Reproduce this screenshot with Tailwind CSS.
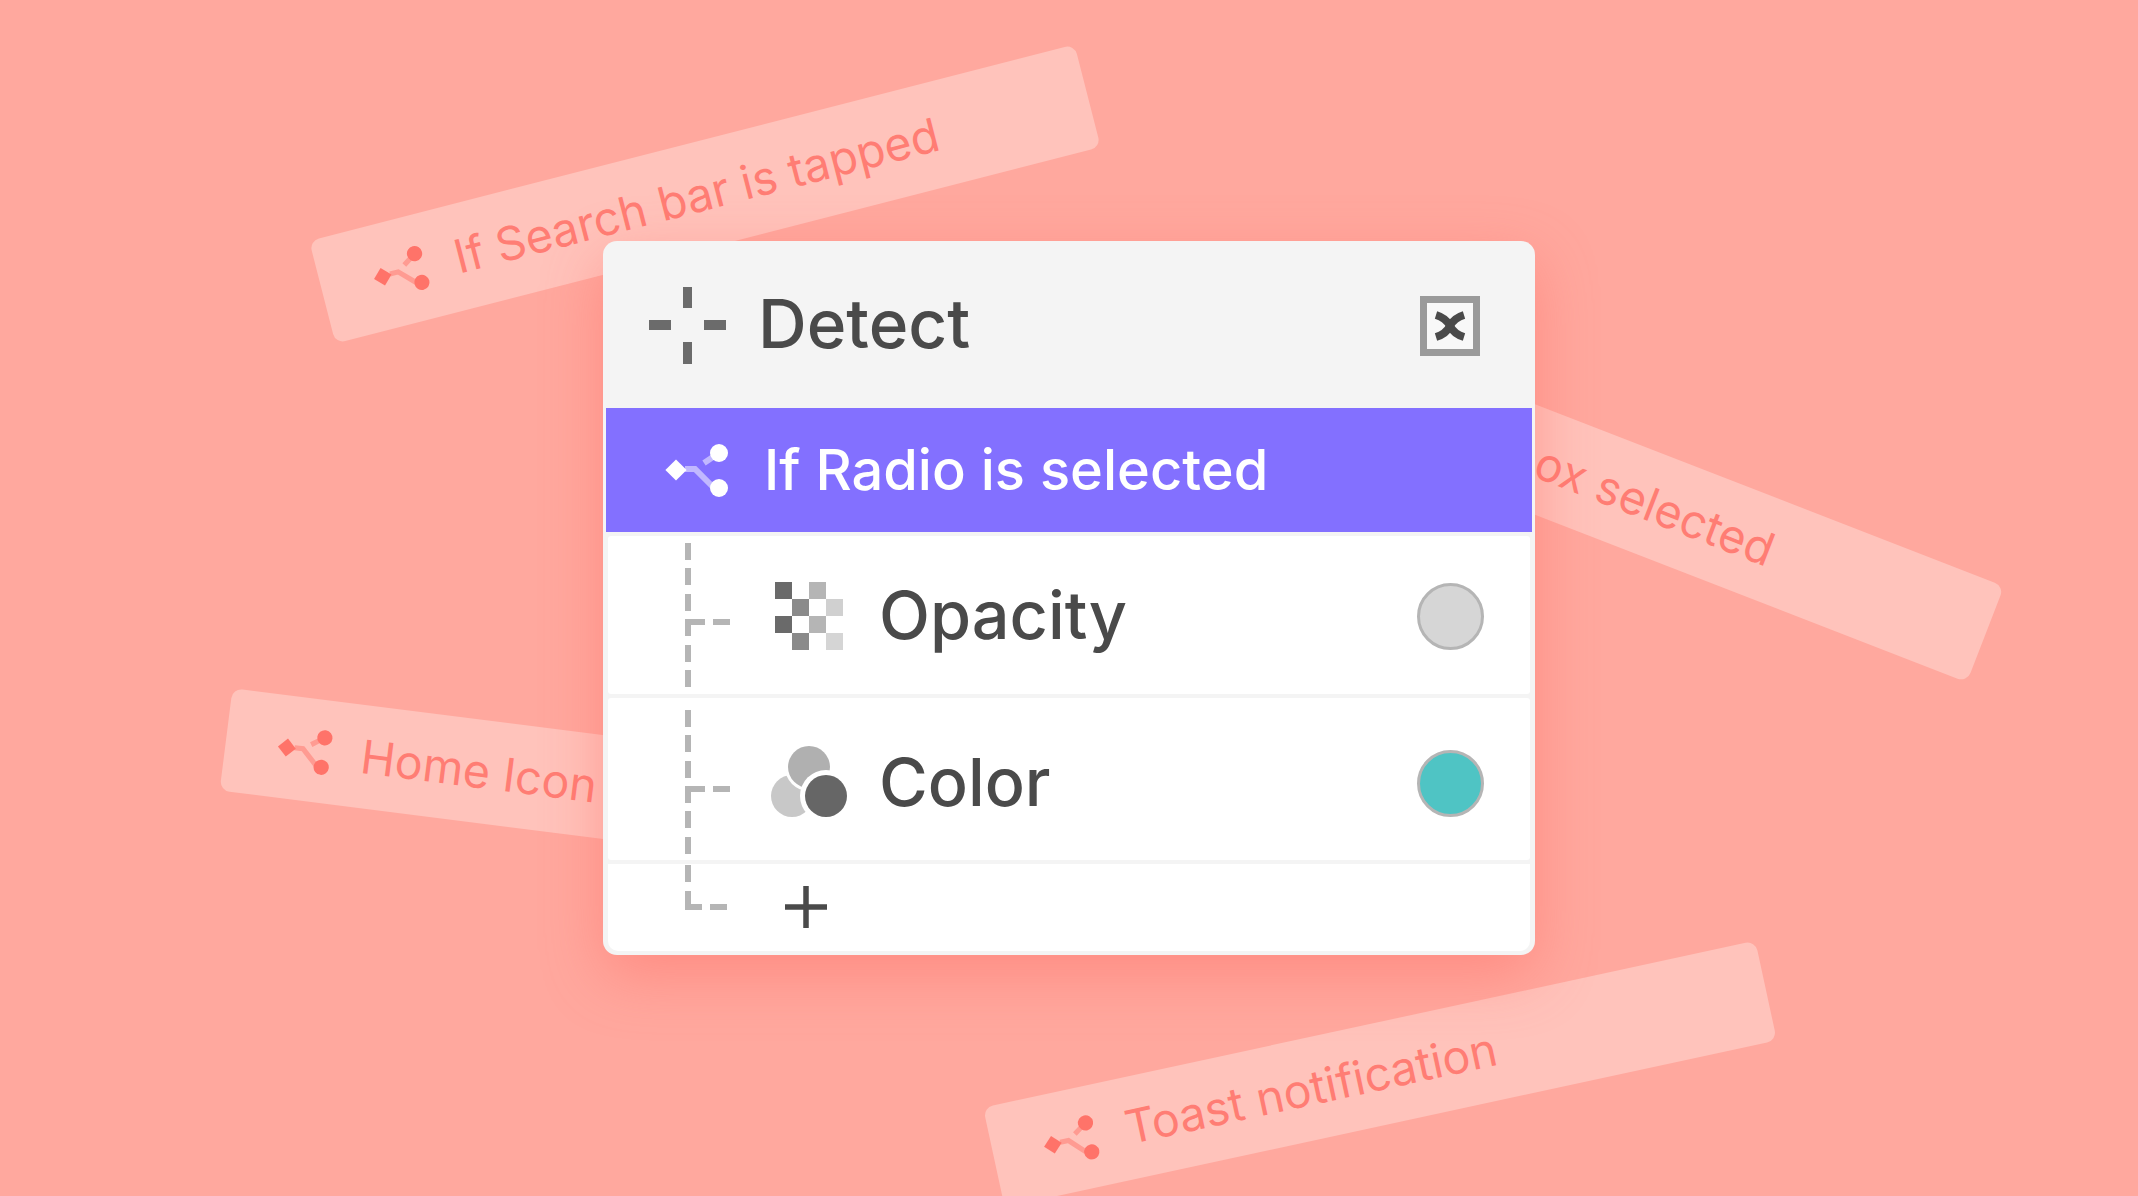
<!DOCTYPE html>
<html lang="en">
<head>
<meta charset="utf-8">
<title>Detect</title>
<script src="https://cdn.jsdelivr.net/npm/@tailwindcss/browser@4"></script>
</head>
<body class="relative w-[2138px] h-[1196px] overflow-hidden flex items-center justify-center bg-[#ffa89e] font-['Inter',sans-serif]">

<svg width="0" height="0" class="absolute">
  <defs>
    <g id="branch">
      <rect x="3.5" y="19.5" width="15" height="15" transform="rotate(45 11 27)"/>
      <circle cx="54" cy="10" r="9"/>
      <circle cx="54" cy="45" r="9"/>
      <path d="M20 26H30L47 43M39 20L48 14" fill="none" stroke-width="6" class="opacity-50" stroke="currentColor"/>
    </g>
  </defs>
</svg>

<div class="absolute left-[310px] top-[141px] w-[790px] h-[106px] rotate-[-14.4deg] rounded-[10px] bg-[#ffc3bb] flex items-center pl-[53px] gap-[28px] text-[#ff7d74] text-[46.5px]">
  <svg viewBox="0 0 66 54" class="w-[56px] h-[46px] fill-current text-[#ff7369]"><use href="#branch"/></svg><span>If Search bar is tapped</span>
</div>
<div class="absolute left-[1228px] top-[441px] w-[784px] h-[103px] rotate-[21.2deg] rounded-[10px] bg-[#ffc3bb] flex items-center pl-[50px] gap-[28px] text-[#ff7d74] text-[46.5px]">
  <svg viewBox="0 0 66 54" class="w-[56px] h-[46px] fill-current text-[#ff7369]"><use href="#branch"/></svg><span>Checkbox selected</span>
</div>
<div class="absolute left-[223px] top-[737px] w-[784px] h-[103px] rotate-[7.2deg] rounded-[10px] bg-[#ffc3bb] flex items-center pl-[52px] gap-[28px] text-[#ff7d74] text-[46.5px]">
  <svg viewBox="0 0 66 54" class="w-[56px] h-[46px] fill-current text-[#ff7369]"><use href="#branch"/></svg><span>Home Icon</span>
</div>
<div class="absolute left-[985px] top-[1023px] w-[790px] h-[102px] rotate-[-12.2deg] rounded-[10px] bg-[#ffc3bb] flex items-center pl-[51px] gap-[28px] text-[#ff7d74] text-[46.5px]">
  <svg viewBox="0 0 66 54" class="w-[56px] h-[46px] fill-current text-[#ff7369]"><use href="#branch"/></svg><span>Toast notification</span>
</div>

<main class="relative w-[932px] h-[714px] flex flex-col rounded-[14px] bg-[#f4f4f4] pt-[3px] px-[3px] shadow-[0_20px_60px_rgba(255,105,95,0.45)] text-[#4a4a4a]">
  <header class="h-[164px] shrink-0 flex items-center pl-[43px] pr-[52px] gap-[32px]">
    <svg viewBox="0 0 77 77" class="w-[77px] h-[77px] shrink-0 fill-[#6b6b6b] mt-[-2px]">
      <rect x="34" y="0" width="9" height="21"/><rect x="34" y="55" width="9" height="22"/>
      <rect x="0" y="33" width="22" height="10"/><rect x="55" y="33" width="22" height="10"/>
    </svg>
    <h1 class="text-[67.5px] leading-none font-medium mt-[-4px]">Detect</h1>
    <svg viewBox="0 0 60 60" class="ml-auto w-[60px] h-[60px] shrink-0 mt-[-1px]">
      <rect x="3.5" y="3.5" width="53" height="53" fill="#f8f8f8" stroke="#9a9a9a" stroke-width="7"/>
      <path d="M16 19Q26 22 30 30Q34 38 44 41M44 19Q34 22 30 30Q26 38 16 41" fill="none" stroke="#4a4a4a" stroke-width="8"/>
    </svg>
  </header>

  <div class="h-[124px] shrink-0 bg-[#8370ff] text-white flex items-center pl-[59px] gap-[33px]">
    <svg viewBox="0 0 66 54" class="w-[66px] h-[54px] shrink-0 fill-white text-white"><use href="#branch"/></svg>
    <span class="text-[56px] leading-none font-medium">If Radio is selected</span>
  </div>

  <div class="h-[158px] shrink-0 mt-[4px] mx-[2px] bg-white rounded-[3px] flex items-center pl-[163px] pr-[46px] gap-[32px] pt-[2px]">
    <svg viewBox="0 0 76 68" class="w-[76px] h-[68px] shrink-0">
      <rect x="4" y="0" width="17" height="17" fill="#6a6a6a"/><rect x="38" y="0" width="17" height="17" fill="#b5b5b5"/>
      <rect x="21" y="17" width="17" height="17" fill="#8a8a8a"/><rect x="55" y="17" width="17" height="17" fill="#d0d0d0"/>
      <rect x="4" y="34" width="17" height="17" fill="#6a6a6a"/><rect x="38" y="34" width="17" height="17" fill="#b5b5b5"/>
      <rect x="21" y="51" width="17" height="17" fill="#8a8a8a"/><rect x="55" y="51" width="17" height="17" fill="#d5d5d5"/>
    </svg>
    <span class="text-[66.5px] leading-none font-medium mt-[-2px]">Opacity</span>
    <span class="ml-auto w-[67px] h-[67px] shrink-0 rounded-full bg-[#d6d6d6] border-[3px] border-[#b5b5b5]"></span>
  </div>

  <div class="h-[162px] shrink-0 mt-[4px] mx-[2px] bg-white rounded-[3px] flex items-center pl-[163px] pr-[46px] gap-[32px] pt-[8px]">
    <svg viewBox="0 0 76 72" class="w-[76px] h-[72px] shrink-0 mt-[-2px]">
      <circle cx="21" cy="50" r="21" fill="#c8c8c8"/>
      <circle cx="38" cy="21" r="24" fill="#fff"/>
      <circle cx="38" cy="21" r="21" fill="#b0b0b0"/>
      <circle cx="55" cy="50" r="26" fill="#fff"/>
      <circle cx="55" cy="50" r="21" fill="#666"/>
    </svg>
    <span class="text-[66.5px] leading-none font-medium mt-[-2px]">Color</span>
    <span class="ml-auto w-[67px] h-[67px] shrink-0 rounded-full bg-[#4fc4c4] border-[3px] border-[#b5b5b5]"></span>
  </div>

  <div class="h-[87px] shrink-0 mt-[4px] mx-[2px] bg-white rounded-b-[10px] flex items-center pl-[177px]">
    <svg viewBox="0 0 42 42" class="w-[42px] h-[42px] mt-[-1px]"><path d="M21 0V42M0 21H42" stroke="#4a4a4a" stroke-width="5.5"/></svg>
  </div>

  <svg viewBox="0 0 932 714" class="absolute inset-0 w-[932px] h-[714px] pointer-events-none">
    <g transform="translate(-603 -241)" fill="#b5b5b5">
      <rect x="685" y="543" width="6" height="17"/><rect x="685" y="568" width="6" height="17"/><rect x="685" y="594" width="6" height="17"/>
      <path d="M685 619H705V625H691V636H685Z"/><rect x="713" y="619" width="17" height="6"/>
      <rect x="685" y="645" width="6" height="17"/><rect x="685" y="670" width="6" height="17"/>
      <rect x="685" y="710" width="6" height="17"/><rect x="685" y="735" width="6" height="17"/><rect x="685" y="761" width="6" height="17"/>
      <path d="M685 786H705V792H691V803H685Z"/><rect x="713" y="786" width="17" height="6"/>
      <rect x="685" y="811" width="6" height="17"/><rect x="685" y="837" width="6" height="17"/>
      <rect x="685" y="865" width="6" height="17"/>
      <path d="M685 891H691V904H702V910H685Z"/><rect x="710" y="904" width="17" height="6"/>
    </g>
  </svg>
</main>
</body>
</html>
